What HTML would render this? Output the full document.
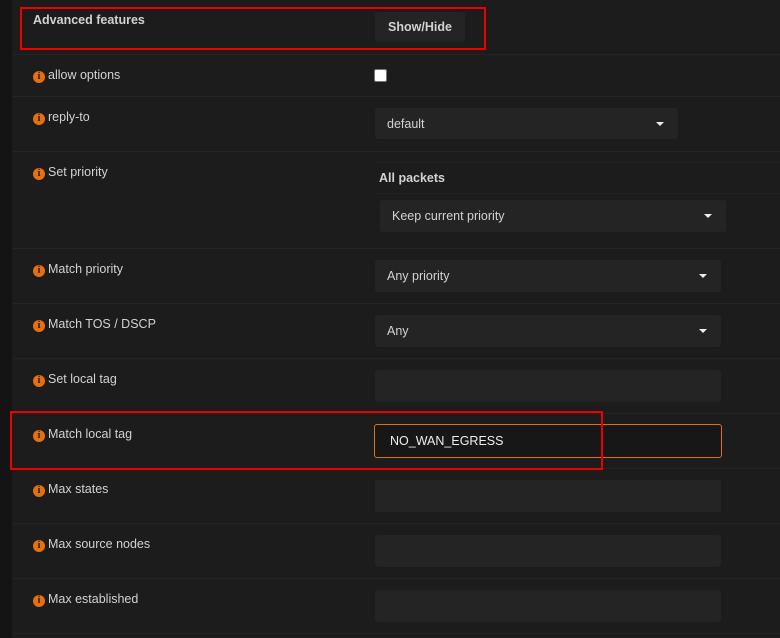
<!DOCTYPE html>
<html><head><style>
body{margin:0;width:780px;height:638px;background:#1c1c1c;overflow:hidden;font-family:"Liberation Sans",sans-serif;font-size:12.5px;color:#d2d2d2;position:relative}
.strip{position:absolute;left:0;top:0;width:12px;height:638px;background:#141414}
.sep{position:absolute;left:12px;right:0;height:1px;background:#242424}
.lbl{position:absolute;left:33px;white-space:nowrap;line-height:14px}
.ic{display:inline-block;width:12px;height:12px;border-radius:50%;background:#e5700f;color:#1c1c1c;font-weight:bold;font-size:10px;line-height:12px;text-align:center;vertical-align:-1px;margin-right:3px;font-family:"Liberation Serif",serif;position:relative;top:-1px}
.ctl{position:absolute;background:#242424;border-radius:3px;box-sizing:border-box;padding-left:12px;line-height:32px}
.car{position:absolute;right:14px;top:14px;border-left:4px solid transparent;border-right:4px solid transparent;border-top:4px solid #eee}
.red{position:absolute;border:2px solid #e00;box-sizing:border-box}
</style></head><body>
<div class="strip"></div>
<div class="sep" style="top:54px"></div>
<div class="sep" style="top:96px"></div>
<div class="sep" style="top:151px"></div>
<div class="sep" style="top:162px;left:374px;background:#222"></div>
<div class="sep" style="top:193px;left:374px;background:#222"></div>
<div class="sep" style="top:248px"></div>
<div class="sep" style="top:303px"></div>
<div class="sep" style="top:358px"></div>
<div class="sep" style="top:413px"></div>
<div class="sep" style="top:468px"></div>
<div class="sep" style="top:523px"></div>
<div class="sep" style="top:578px"></div>
<div class="sep" style="top:633px"></div>

<div class="lbl" style="top:13px;font-weight:bold">Advanced features</div>
<div class="ctl" style="left:375px;top:12px;width:90px;height:30px;line-height:30px;padding:0;text-align:center;font-weight:bold">Show/Hide</div>

<div class="lbl" style="top:68px"><span class="ic">i</span>allow options</div>
<div style="position:absolute;left:374px;top:69px;width:13px;height:13px;background:#fff;border:1px solid #777;box-sizing:border-box;border-radius:2px"></div>

<div class="lbl" style="top:110px"><span class="ic">i</span>reply-to</div>
<div class="ctl" style="left:375px;top:108px;width:303px;height:31px">default<span class="car"></span></div>

<div class="lbl" style="top:165px"><span class="ic">i</span>Set priority</div>
<div style="position:absolute;left:379px;top:171px;font-weight:bold">All packets</div>
<div class="ctl" style="left:380px;top:200px;width:346px;height:32px">Keep current priority<span class="car"></span></div>

<div class="lbl" style="top:262px"><span class="ic">i</span>Match priority</div>
<div class="ctl" style="left:375px;top:260px;width:346px;height:32px">Any priority<span class="car"></span></div>

<div class="lbl" style="top:317px"><span class="ic">i</span>Match TOS / DSCP</div>
<div class="ctl" style="left:375px;top:315px;width:346px;height:32px">Any<span class="car"></span></div>

<div class="lbl" style="top:372px"><span class="ic">i</span>Set local tag</div>
<div class="ctl" style="left:375px;top:370px;width:346px;height:32px"></div>

<div class="lbl" style="top:427px"><span class="ic">i</span>Match local tag</div>
<div class="ctl" style="left:374px;top:424px;width:348px;height:34px;background:#171717;border:1px solid #e0700f;padding-left:15px;color:#eee">NO_WAN_EGRESS</div>

<div class="lbl" style="top:482px"><span class="ic">i</span>Max states</div>
<div class="ctl" style="left:375px;top:480px;width:346px;height:32px"></div>
<div class="lbl" style="top:537px"><span class="ic">i</span>Max source nodes</div>
<div class="ctl" style="left:375px;top:535px;width:346px;height:32px"></div>
<div class="lbl" style="top:592px"><span class="ic">i</span>Max established</div>
<div class="ctl" style="left:375px;top:590px;width:346px;height:32px"></div>

<div class="red" style="left:20px;top:7px;width:466px;height:43px"></div>
<div class="red" style="left:10px;top:411px;width:593px;height:59px"></div>
</body></html>
